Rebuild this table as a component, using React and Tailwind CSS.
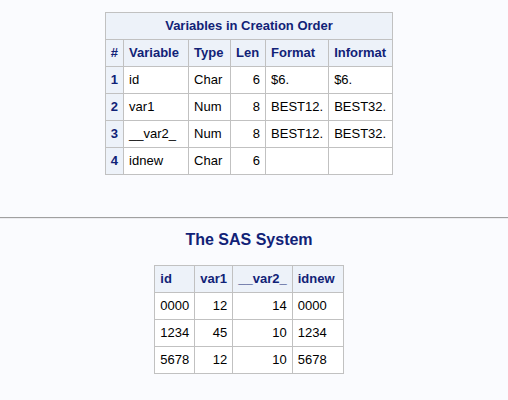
const vars = [
  { n: 1, name: "id", type: "Char", len: 6, fmt: "$6.", infmt: "$6." },
  { n: 2, name: "var1", type: "Num", len: 8, fmt: "BEST12.", infmt: "BEST32." },
  { n: 3, name: "__var2_", type: "Num", len: 8, fmt: "BEST12.", infmt: "BEST32." },
  { n: 4, name: "idnew", type: "Char", len: 6, fmt: "", infmt: "" },
];

const rows = [
  { id: "0000", var1: 12, var2: 14, idnew: "0000" },
  { id: "1234", var1: 45, var2: 10, idnew: "1234" },
  { id: "5678", var1: 12, var2: 10, idnew: "5678" },
];

const head = "border border-[#c1c1c1] bg-[#edf2f9] text-[#112277] font-bold h-[27px] px-[5px]";
const th = head + " text-left";
const td = "border border-[#c1c1c1] bg-white text-black h-[27px] px-[5px]";

export default function App() {
  return (
    <div className="min-h-screen bg-[#fafbfe] text-[13px]" style={{ fontFamily: '"Liberation Sans", Arial, sans-serif' }}>
      <div className="w-[498px] pt-[12px] flex justify-center">
        <table className="border-collapse">
          <thead>
            <tr>
              <th colSpan={6} className={head + " text-center"}>Variables in Creation Order</th>
            </tr>
            <tr>
              <th className={th + " w-[18px] px-[4px]"}>#</th>
              <th className={th + " w-[65px]"}>Variable</th>
              <th className={th + " w-[42px]"}>Type</th>
              <th className={th + " w-[35px]"}>Len</th>
              <th className={th + " w-[62px]"}>Format</th>
              <th className={th + " w-[64px]"}>Informat</th>
            </tr>
          </thead>
          <tbody>
            {vars.map((v) => (
              <tr key={v.n}>
                <th className={th + " px-[4px]"}>{v.n}</th>
                <td className={td}>{v.name}</td>
                <td className={td}>{v.type}</td>
                <td className={td + " text-right"}>{v.len}</td>
                <td className={td}>{v.fmt}</td>
                <td className={td}>{v.infmt}</td>
              </tr>
            ))}
          </tbody>
        </table>
      </div>

      <div className="mt-[42px] border-t border-[#a0a0a0]" />
      <div className="border-t border-[#ececf0]" />

      <div className="w-[498px] flex flex-col items-center">
        <h1 className="mt-[11px] text-[16px] font-bold text-[#112277] leading-[20px]">The SAS System</h1>
        <table className="border-collapse mt-[15px]">
          <thead>
            <tr>
              <th className={th + " w-[39px]"}>id</th>
              <th className={th + " w-[38px]"}>var1</th>
              <th className={th + " w-[59px]"}>__var2_</th>
              <th className={th + " w-[51px]"}>idnew</th>
            </tr>
          </thead>
          <tbody>
            {rows.map((r) => (
              <tr key={r.id}>
                <td className={td}>{r.id}</td>
                <td className={td + " text-right"}>{r.var1}</td>
                <td className={td + " text-right"}>{r.var2}</td>
                <td className={td}>{r.idnew}</td>
              </tr>
            ))}
          </tbody>
        </table>
      </div>
    </div>
  );
}
